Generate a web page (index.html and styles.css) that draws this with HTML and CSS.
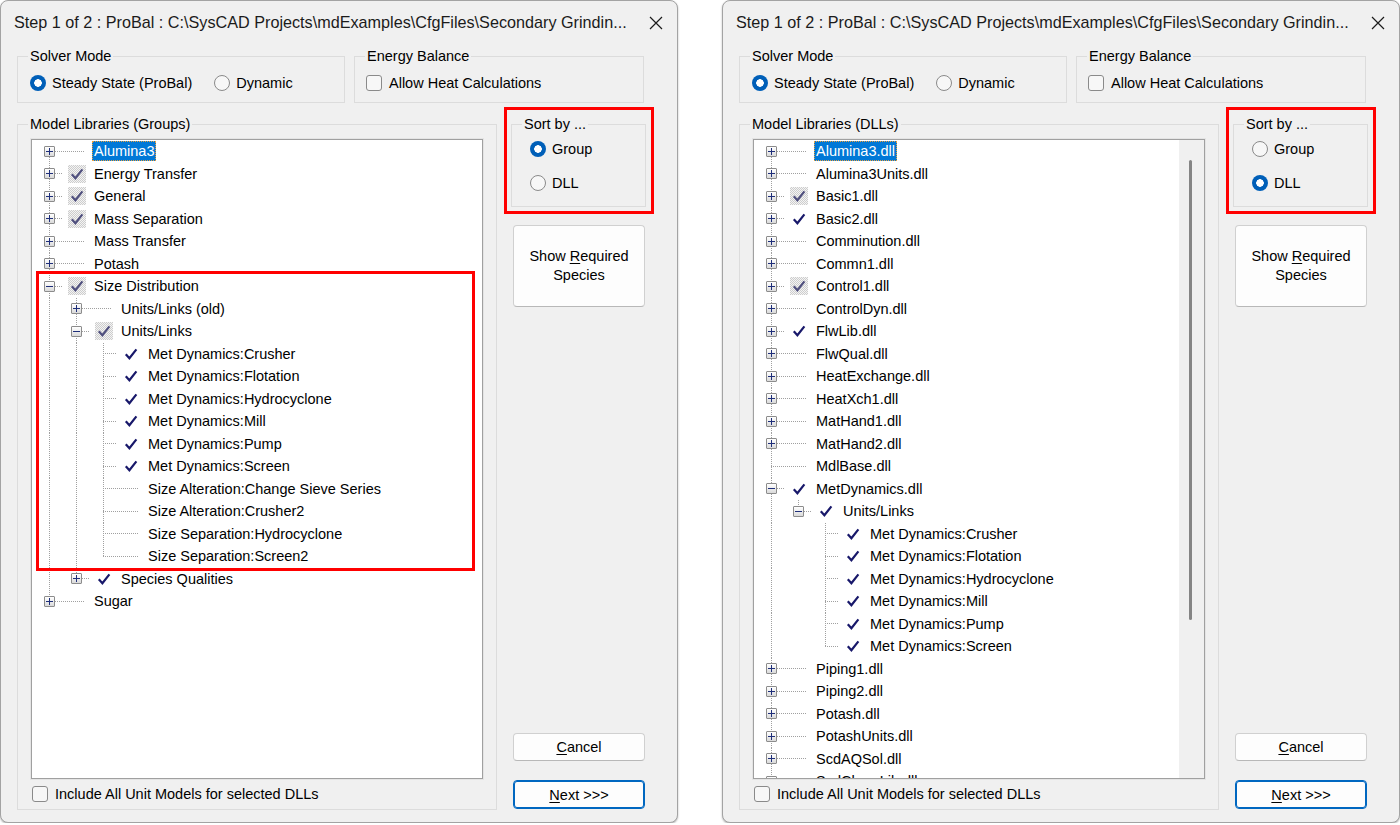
FILE: index.html
```html
<!DOCTYPE html>
<html lang="en">
<head>
    <meta charset="UTF-8">
    <title>ProBal - Model Libraries</title>
    <link rel="stylesheet" href="styles.css">
</head>
<body>
    <svg class="defs" width="0" height="0">
        <symbol id="tick" viewBox="0 0 16 16"><path d="M2.8 8.2 6.4 12.2 13.4 3.4" fill="none" stroke="currentColor" stroke-width="2.2"/></symbol>
        <symbol id="x" viewBox="0 0 14 14"><path d="M1 1 13 13M13 1 1 13" fill="none" stroke="currentColor" stroke-width="1.2"/></symbol>
    </svg>

    <!-- sorted by group -->
    <div class="dialog">
        <div class="titlebar">
            <span class="title">Step 1 of 2 : ProBal : C:\SysCAD Projects\mdExamples\CfgFiles\Secondary Grindin...</span>
            <svg class="close"><use href="#x"/></svg>
        </div>
        <div class="content">
            <div class="toprow">
                <fieldset class="solver">
                    <legend>Solver Mode</legend>
                    <div class="opts">
                        <label class="radio"><i class="rb on"></i>Steady State (ProBal)</label>
                        <label class="radio"><i class="rb"></i>Dynamic</label>
                    </div>
                </fieldset>
                <fieldset class="energy">
                    <legend>Energy Balance</legend>
                    <label class="check"><i class="cb"></i>Allow Heat Calculations</label>
                </fieldset>
            </div>
            <div class="mainrow">
                <fieldset class="libs">
                    <legend>Model Libraries (Groups)</legend>
                    <div class="tree">
                        <div class="rows">
                            <div class="row"><i class="n first"><b class="bx plus"></b></i><i class="ck"></i><span class="tx sel">Alumina3</span></div>
                            <div class="row"><i class="n mid"><b class="bx plus"></b></i><i class="ck mixed"><svg><use href="#tick"/></svg></i><span class="tx">Energy Transfer</span></div>
                            <div class="row"><i class="n mid"><b class="bx plus"></b></i><i class="ck mixed"><svg><use href="#tick"/></svg></i><span class="tx">General</span></div>
                            <div class="row"><i class="n mid"><b class="bx plus"></b></i><i class="ck mixed"><svg><use href="#tick"/></svg></i><span class="tx">Mass Separation</span></div>
                            <div class="row"><i class="n mid"><b class="bx plus"></b></i><i class="ck"></i><span class="tx">Mass Transfer</span></div>
                            <div class="row"><i class="n mid"><b class="bx plus"></b></i><i class="ck"></i><span class="tx">Potash</span></div>
                            <div class="row"><i class="n mid"><b class="bx minus"></b></i><i class="ck mixed"><svg><use href="#tick"/></svg></i><span class="tx">Size Distribution</span></div>
                            <div class="row"><i class="p"></i><i class="n mid"><b class="bx plus"></b></i><i class="ck"></i><span class="tx">Units/Links (old)</span></div>
                            <div class="row"><i class="p"></i><i class="n mid"><b class="bx minus"></b></i><i class="ck mixed"><svg><use href="#tick"/></svg></i><span class="tx">Units/Links</span></div>
                            <div class="row"><i class="p"></i><i class="p"></i><i class="n mid"></i><i class="ck on"><svg><use href="#tick"/></svg></i><span class="tx">Met Dynamics:Crusher</span></div>
                            <div class="row"><i class="p"></i><i class="p"></i><i class="n mid"></i><i class="ck on"><svg><use href="#tick"/></svg></i><span class="tx">Met Dynamics:Flotation</span></div>
                            <div class="row"><i class="p"></i><i class="p"></i><i class="n mid"></i><i class="ck on"><svg><use href="#tick"/></svg></i><span class="tx">Met Dynamics:Hydrocyclone</span></div>
                            <div class="row"><i class="p"></i><i class="p"></i><i class="n mid"></i><i class="ck on"><svg><use href="#tick"/></svg></i><span class="tx">Met Dynamics:Mill</span></div>
                            <div class="row"><i class="p"></i><i class="p"></i><i class="n mid"></i><i class="ck on"><svg><use href="#tick"/></svg></i><span class="tx">Met Dynamics:Pump</span></div>
                            <div class="row"><i class="p"></i><i class="p"></i><i class="n mid"></i><i class="ck on"><svg><use href="#tick"/></svg></i><span class="tx">Met Dynamics:Screen</span></div>
                            <div class="row"><i class="p"></i><i class="p"></i><i class="n mid"></i><i class="ck"></i><span class="tx">Size Alteration:Change Sieve Series</span></div>
                            <div class="row"><i class="p"></i><i class="p"></i><i class="n mid"></i><i class="ck"></i><span class="tx">Size Alteration:Crusher2</span></div>
                            <div class="row"><i class="p"></i><i class="p"></i><i class="n mid"></i><i class="ck"></i><span class="tx">Size Separation:Hydrocyclone</span></div>
                            <div class="row"><i class="p"></i><i class="p"></i><i class="n last"></i><i class="ck"></i><span class="tx">Size Separation:Screen2</span></div>
                            <div class="row"><i class="p"></i><i class="n last"><b class="bx plus"></b></i><i class="ck on"><svg><use href="#tick"/></svg></i><span class="tx">Species Qualities</span></div>
                            <div class="row"><i class="n last"><b class="bx plus"></b></i><i class="ck"></i><span class="tx">Sugar</span></div>
                        </div>
                        <div class="mark"></div>
                    </div>
                    <label class="check include"><i class="cb"></i>Include All Unit Models for selected DLLs</label>
                </fieldset>
                <div class="side">
                    <div class="redbox">
                        <fieldset class="sort">
                            <legend>Sort by ...</legend>
                            <label class="radio"><i class="rb on"></i>Group</label>
                            <label class="radio"><i class="rb"></i>DLL</label>
                        </fieldset>
                    </div>
                    <button class="btn species">Show <u>R</u>equired<br>Species</button>
                    <button class="btn cancel"><u>C</u>ancel</button>
                    <button class="btn next"><u>N</u>ext &gt;&gt;&gt;</button>
                </div>
            </div>
        </div>
    </div>

    <!-- sorted by dll -->
    <div class="dialog">
        <div class="titlebar">
            <span class="title">Step 1 of 2 : ProBal : C:\SysCAD Projects\mdExamples\CfgFiles\Secondary Grindin...</span>
            <svg class="close"><use href="#x"/></svg>
        </div>
        <div class="content">
            <div class="toprow">
                <fieldset class="solver">
                    <legend>Solver Mode</legend>
                    <div class="opts">
                        <label class="radio"><i class="rb on"></i>Steady State (ProBal)</label>
                        <label class="radio"><i class="rb"></i>Dynamic</label>
                    </div>
                </fieldset>
                <fieldset class="energy">
                    <legend>Energy Balance</legend>
                    <label class="check"><i class="cb"></i>Allow Heat Calculations</label>
                </fieldset>
            </div>
            <div class="mainrow">
                <fieldset class="libs">
                    <legend>Model Libraries (DLLs)</legend>
                    <div class="tree">
                        <div class="rows">
                            <div class="row"><i class="n first"><b class="bx plus"></b></i><i class="ck"></i><span class="tx sel">Alumina3.dll</span></div>
                            <div class="row"><i class="n mid"><b class="bx plus"></b></i><i class="ck"></i><span class="tx">Alumina3Units.dll</span></div>
                            <div class="row"><i class="n mid"><b class="bx plus"></b></i><i class="ck mixed"><svg><use href="#tick"/></svg></i><span class="tx">Basic1.dll</span></div>
                            <div class="row"><i class="n mid"><b class="bx plus"></b></i><i class="ck on"><svg><use href="#tick"/></svg></i><span class="tx">Basic2.dll</span></div>
                            <div class="row"><i class="n mid"><b class="bx plus"></b></i><i class="ck"></i><span class="tx">Comminution.dll</span></div>
                            <div class="row"><i class="n mid"><b class="bx plus"></b></i><i class="ck"></i><span class="tx">Commn1.dll</span></div>
                            <div class="row"><i class="n mid"><b class="bx plus"></b></i><i class="ck mixed"><svg><use href="#tick"/></svg></i><span class="tx">Control1.dll</span></div>
                            <div class="row"><i class="n mid"><b class="bx plus"></b></i><i class="ck"></i><span class="tx">ControlDyn.dll</span></div>
                            <div class="row"><i class="n mid"><b class="bx plus"></b></i><i class="ck on"><svg><use href="#tick"/></svg></i><span class="tx">FlwLib.dll</span></div>
                            <div class="row"><i class="n mid"><b class="bx plus"></b></i><i class="ck"></i><span class="tx">FlwQual.dll</span></div>
                            <div class="row"><i class="n mid"><b class="bx plus"></b></i><i class="ck"></i><span class="tx">HeatExchange.dll</span></div>
                            <div class="row"><i class="n mid"><b class="bx plus"></b></i><i class="ck"></i><span class="tx">HeatXch1.dll</span></div>
                            <div class="row"><i class="n mid"><b class="bx plus"></b></i><i class="ck"></i><span class="tx">MatHand1.dll</span></div>
                            <div class="row"><i class="n mid"><b class="bx plus"></b></i><i class="ck"></i><span class="tx">MatHand2.dll</span></div>
                            <div class="row"><i class="n mid"></i><i class="ck"></i><span class="tx">MdlBase.dll</span></div>
                            <div class="row"><i class="n mid"><b class="bx minus"></b></i><i class="ck on"><svg><use href="#tick"/></svg></i><span class="tx">MetDynamics.dll</span></div>
                            <div class="row"><i class="p"></i><i class="n last"><b class="bx minus"></b></i><i class="ck on"><svg><use href="#tick"/></svg></i><span class="tx">Units/Links</span></div>
                            <div class="row"><i class="p"></i><i class="e"></i><i class="n mid"></i><i class="ck on"><svg><use href="#tick"/></svg></i><span class="tx">Met Dynamics:Crusher</span></div>
                            <div class="row"><i class="p"></i><i class="e"></i><i class="n mid"></i><i class="ck on"><svg><use href="#tick"/></svg></i><span class="tx">Met Dynamics:Flotation</span></div>
                            <div class="row"><i class="p"></i><i class="e"></i><i class="n mid"></i><i class="ck on"><svg><use href="#tick"/></svg></i><span class="tx">Met Dynamics:Hydrocyclone</span></div>
                            <div class="row"><i class="p"></i><i class="e"></i><i class="n mid"></i><i class="ck on"><svg><use href="#tick"/></svg></i><span class="tx">Met Dynamics:Mill</span></div>
                            <div class="row"><i class="p"></i><i class="e"></i><i class="n mid"></i><i class="ck on"><svg><use href="#tick"/></svg></i><span class="tx">Met Dynamics:Pump</span></div>
                            <div class="row"><i class="p"></i><i class="e"></i><i class="n last"></i><i class="ck on"><svg><use href="#tick"/></svg></i><span class="tx">Met Dynamics:Screen</span></div>
                            <div class="row"><i class="n mid"><b class="bx plus"></b></i><i class="ck"></i><span class="tx">Piping1.dll</span></div>
                            <div class="row"><i class="n mid"><b class="bx plus"></b></i><i class="ck"></i><span class="tx">Piping2.dll</span></div>
                            <div class="row"><i class="n mid"><b class="bx plus"></b></i><i class="ck"></i><span class="tx">Potash.dll</span></div>
                            <div class="row"><i class="n mid"><b class="bx plus"></b></i><i class="ck"></i><span class="tx">PotashUnits.dll</span></div>
                            <div class="row"><i class="n mid"><b class="bx plus"></b></i><i class="ck"></i><span class="tx">ScdAQSol.dll</span></div>
                            <div class="row"><i class="n mid"><b class="bx plus"></b></i><i class="ck"></i><span class="tx">ScdChemLib.dll</span></div>
                        </div>
                        <div class="vbar"><div class="thumb"></div></div>
                    </div>
                    <label class="check include"><i class="cb"></i>Include All Unit Models for selected DLLs</label>
                </fieldset>
                <div class="side">
                    <div class="redbox">
                        <fieldset class="sort">
                            <legend>Sort by ...</legend>
                            <label class="radio"><i class="rb"></i>Group</label>
                            <label class="radio"><i class="rb on"></i>DLL</label>
                        </fieldset>
                    </div>
                    <button class="btn species">Show <u>R</u>equired<br>Species</button>
                    <button class="btn cancel"><u>C</u>ancel</button>
                    <button class="btn next"><u>N</u>ext &gt;&gt;&gt;</button>
                </div>
            </div>
        </div>
    </div>
</body>
</html>
```

FILE: styles.css
```css
body {
    margin: 0;
    background: #fff;
    display: flex;
    gap: 44px;
    font-family: "Liberation Sans", Arial, sans-serif;
    font-size: 14.5px;
    color: #000;
}
.defs {
    position: absolute;
}
.dialog {
    width: 678px;
    height: 823px;
    box-sizing: border-box;
    background: #f0f0f0;
    border: 1px solid #a3a3a3;
    border-radius: 8px;
    box-shadow: 0 1px 2px rgba(0, 0, 0, 0.3);
    overflow: hidden;
}
.titlebar {
    height: 43px;
    display: flex;
    align-items: center;
    justify-content: space-between;
    padding: 0 14px 0 13px;
}
.title {
    font-size: 16.2px;
    color: #1b1b1b;
    white-space: nowrap;
}
.close {
    width: 14px;
    height: 14px;
    color: #1b1b1b;
}
.content {
    padding: 3px 0 0 16px;
}

/* group boxes */
fieldset {
    box-sizing: border-box;
    margin: 0;
    min-width: 0;
    border: 1px solid #dcdcdc;
}
legend {
    padding: 0 2px;
    line-height: 18px;
}
.toprow {
    display: flex;
    gap: 9px;
}
.solver {
    width: 328px;
    padding: 8px 12px 9px;
}
.solver legend {
    margin-left: -2px;
}
.energy {
    width: 290px;
    padding: 8px 11px 9px;
}
.energy legend {
    margin-left: -1px;
}
.opts {
    display: flex;
    gap: 22px;
}
.radio, .check {
    display: flex;
    align-items: center;
    gap: 6px;
    height: 20px;
    white-space: nowrap;
}
.check {
    gap: 7px;
}
.rb {
    width: 16px;
    height: 16px;
    box-sizing: border-box;
    border-radius: 50%;
    border: 1px solid #8a8a8a;
    background: #f7f7f7;
}
.rb.on {
    border: none;
    background: radial-gradient(circle, #fff 0 3.5px, #005fb8 4px);
}
.cb {
    width: 16px;
    height: 16px;
    box-sizing: border-box;
    border: 1px solid #8a8a8a;
    border-radius: 3px;
    background: #f7f7f7;
}

.mainrow {
    display: flex;
    align-items: flex-start;
    gap: 7px;
    margin-top: 4px;
}
.libs {
    width: 480px;
    margin-top: 8px;
    padding: 6px 13px 6px;
}
.libs legend {
    margin-left: -3px;
}
.include {
    margin: 6px 0 0 1px;
    height: 18px;
}

/* tree view */
.tree {
    --dv: repeating-linear-gradient(#a0a0a0 0 1px, transparent 1px 2px);
    --dh: repeating-linear-gradient(90deg, #a0a0a0 0 1px, transparent 1px 2px);
    height: 640px;
    box-sizing: border-box;
    border: 1px solid #a0a0a0;
    box-shadow: 0 0 0 1px #e4e4e4;
    background: #fff;
    position: relative;
    overflow: hidden;
    display: flex;
}
.rows {
    flex: 1;
    padding-left: 4px;
}
.row {
    display: flex;
    align-items: center;
    height: 22.5px;
    white-space: nowrap;
}
.row i {
    flex: none;
    width: 27px;
    align-self: stretch;
    display: flex;
    align-items: center;
    justify-content: center;
}
.p {
    background: var(--dv) 13px 0 / 1px 100% no-repeat;
}
.n {
    background: var(--dh) 13px 50% / 14px 1px no-repeat;
}
.n.first {
    background: var(--dh) 13px 50% / 14px 1px no-repeat, var(--dv) 13px 100% / 1px 50% no-repeat;
}
.n.mid {
    background: var(--dh) 13px 50% / 14px 1px no-repeat, var(--dv) 13px 0 / 1px 100% no-repeat;
}
.n.last {
    background: var(--dh) 13px 50% / 14px 1px no-repeat, var(--dv) 13px 0 / 1px 50% no-repeat;
}
.ck {
    background: var(--dh) 0 50% / 22px 1px no-repeat;
}
.ck.on, .ck.mixed {
    background: none;
}
.ck svg {
    width: 16px;
    height: 16px;
}
.ck.on {
    color: #18186a;
}
.ck.mixed svg {
    color: #50507e;
    padding: 1px;
    background: repeating-conic-gradient(#cdcdcd 0 25%, #f4f4f4 0 50%) 0 0 / 2px 2px;
}
.bx {
    width: 11px;
    height: 11px;
    box-sizing: border-box;
    border: 1px solid #8c8c8c;
    border-radius: 1px;
    background: linear-gradient(#fff, #e0e0e0);
}
.bx.plus {
    background: linear-gradient(#1f2f7a, #1f2f7a) center / 7px 1px no-repeat,
        linear-gradient(#1f2f7a, #1f2f7a) center / 1px 7px no-repeat,
        linear-gradient(#fff, #dadada);
}
.bx.minus {
    background: linear-gradient(#1f2f7a, #1f2f7a) center / 7px 1px no-repeat,
        linear-gradient(#fff, #dadada);
}
.tx {
    margin-left: 2px;
    padding: 0 2px;
    line-height: 20px;
}
.tx.sel {
    background: #0078d7;
    color: #fff;
    outline: 1px dotted #e8a040;
    outline-offset: -1px;
}
.mark {
    position: absolute;
    left: 4px;
    top: 131px;
    width: 439px;
    height: 300px;
    box-sizing: border-box;
    border: 3px solid #f00;
}
.vbar {
    flex: none;
    width: 25px;
    background: #f0f0f0;
    padding-left: 10px;
    box-sizing: border-box;
}
.thumb {
    width: 3px;
    height: 460px;
    margin-top: 20px;
    background: #858585;
    border-radius: 2px;
}

/* right column */
.side {
    display: flex;
    flex-direction: column;
    align-items: flex-start;
}
.redbox {
    width: 150px;
    height: 107px;
    box-sizing: border-box;
    border: 3px solid #f00;
    padding: 5px 4px 0;
}
.sort {
    width: 135px;
    height: 92px;
    padding: 6px 12px 0 18px;
}
.sort legend {
    margin-left: -8px;
}
.sort .radio + .radio {
    margin-top: 14px;
}
.btn {
    display: block;
    box-sizing: border-box;
    width: 132px;
    margin-left: 9px;
    padding: 0;
    font: inherit;
    color: #000;
    background: #fdfdfd;
    border: 1px solid #d0d0d0;
    border-bottom-color: #b8b8b8;
    border-radius: 4px;
}
.btn u {
    text-underline-offset: 2px;
}
.species {
    height: 82px;
    margin-top: 11px;
    line-height: 19px;
}
.cancel {
    height: 28px;
    margin-top: 426px;
}
.next {
    height: 29px;
    margin-top: 19px;
    border-color: #0067c0;
    box-shadow: inset 0 0 0 1px #0067c0;
}
```
